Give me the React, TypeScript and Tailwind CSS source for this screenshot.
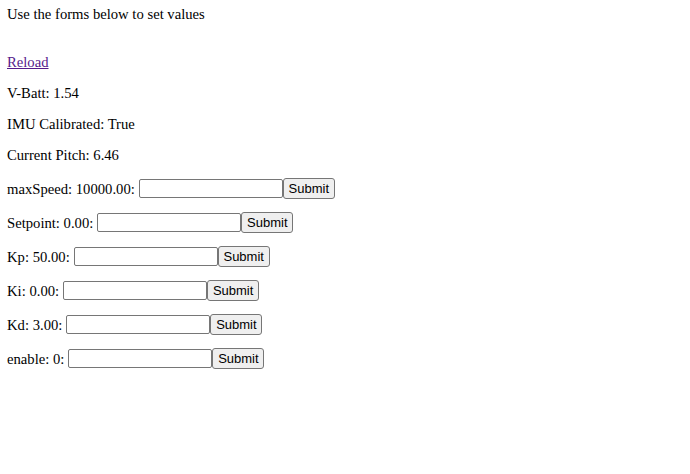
import React from "react";

const rows: { label: string }[] = [
  { label: "maxSpeed: 10000.00:" },
  { label: "Setpoint: 0.00:" },
  { label: "Kp: 50.00:" },
  { label: "Ki: 0.00:" },
  { label: "Kd: 3.00:" },
  { label: "enable: 0:" },
];

export default function App() {
  return (
    <div
      className="min-h-[474px] bg-white pl-[7px] pt-[5px] text-[14.67px] leading-[18px] text-black"
      style={{ fontFamily: '"Liberation Serif", "Times New Roman", serif' }}
    >
      <div className="h-[18px]">Use the forms below to set values</div>
      <div className="mt-[30px] h-[18px]">
        <a href="#" className="text-[#551a8b] underline">
          Reload
        </a>
      </div>
      <div className="mt-[13px] h-[18px]">V-Batt: 1.54</div>
      <div className="mt-[13px] h-[18px]">IMU Calibrated: True</div>
      <div className="mt-[13px] h-[18px]">Current Pitch: 6.46</div>
      <div className="mt-[14px] flex flex-col gap-[14px]">
        {rows.map((r) => (
          <form
            key={r.label}
            className="flex h-[20px] items-center"
            onSubmit={(e) => e.preventDefault()}
          >
            <span className="mr-[4px] whitespace-pre pt-[2px]">{r.label}</span>
            <input
              type="text"
              className="h-[19px] w-[144px] rounded-[2px] border border-[#767676] bg-white px-[2px] text-[12px] outline-none"
              style={{ fontFamily: '"Liberation Sans", Arial, sans-serif' }}
            />
            <button
              type="submit"
              className="h-[21px] w-[52px] rounded-[3px] border border-[#767676] bg-[#efefef] pt-[1px] text-center text-[13px] leading-[17px] text-black"
              style={{ fontFamily: '"Liberation Sans", Arial, sans-serif' }}
            >
              Submit
            </button>
          </form>
        ))}
      </div>
    </div>
  );
}
